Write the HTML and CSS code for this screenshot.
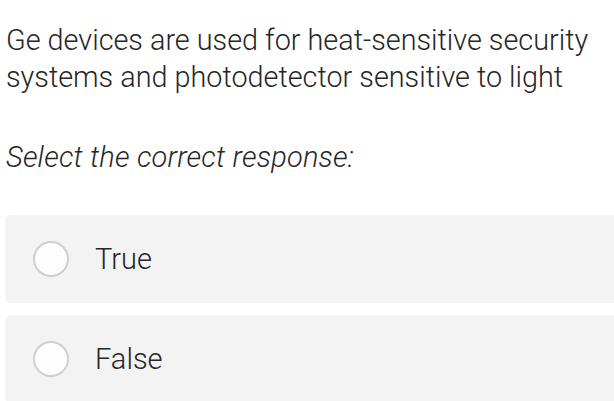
FILE: index.html
```html
<!DOCTYPE html>
<html>
<head>
<meta charset="utf-8">
<link rel="stylesheet" href="styles.css">
</head>
<body>
<div class="page">
  <p class="question">Ge devices are used for heat-sensitive security systems and photodetector sensitive to light</p>
  <p class="prompt">Select the correct response:</p>
  <div class="options">
    <label class="option"><span class="radio"></span><span class="label">True</span></label>
    <label class="option"><span class="radio"></span><span class="label">False</span></label>
  </div>
</div>
</body>
</html>
```
FILE: styles.css
```css
html, body {
  margin: 0;
  padding: 0;
  background: #ffffff;
}
body {
  font-family: Roboto, "Noto Sans", sans-serif;
  font-weight: 300;
  color: #262626;
  overflow: hidden;
}
.page {
  padding: 22px 0 0 6px;
}
.question {
  margin: 0;
  font-size: 28.8px;
  line-height: 37px;
  width: 600px;
}
.prompt {
  margin: 43px 0 0 0;
  font-size: 29px;
  line-height: 37px;
  font-style: italic;
  letter-spacing: 0.2px;
}
.options {
  margin: 39px 0 0 -1px;
  display: flex;
  flex-direction: column;
  gap: 12px;
}
.option {
  display: flex;
  align-items: center;
  height: 88px;
  background: #f3f3f3;
  border-radius: 6px 0 0 6px;
  padding-left: 28px;
}
.radio {
  width: 32px;
  height: 32px;
  border: 2px solid #cfcfcf;
  border-radius: 50%;
  background: #fdfdfd;
  flex: none;
}
.label {
  margin-left: 26px;
  font-size: 29px;
}
```
